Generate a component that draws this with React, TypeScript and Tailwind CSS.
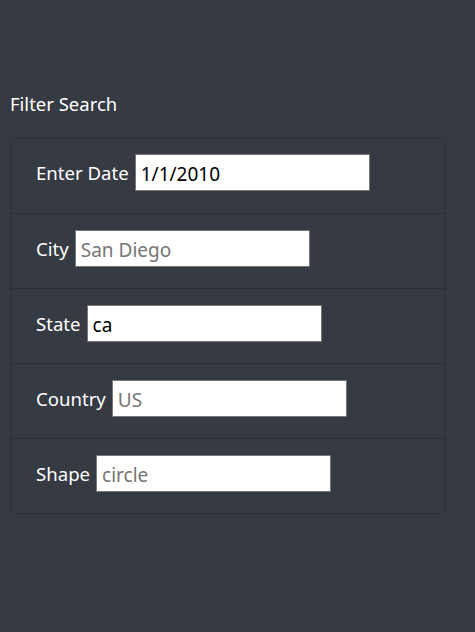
import React from 'react';

const fields = [
  { label: 'Enter Date', value: '1/1/2010', placeholder: '' },
  { label: 'City', value: '', placeholder: 'San Diego' },
  { label: 'State', value: 'ca', placeholder: '' },
  { label: 'Country', value: '', placeholder: 'US' },
  { label: 'Shape', value: '', placeholder: 'circle' },
];

export default function App() {
  return (
    <div
      className="min-h-[632px] w-full bg-[#363a42] pt-[91px] px-[10px] text-white"
      style={{ fontFamily: '"Noto Sans", "Open Sans", sans-serif' }}
    >
      <h5 className="text-[18.5px] leading-[26px]">Filter Search</h5>
      <ul className="mt-[21px] w-[436px] rounded-md border border-[#2c3037]">
        {fields.map((f, i) => (
          <li
            key={f.label}
            className={
              'flex h-[74px] items-start px-[25px] pt-[15px] ' +
              (i > 0 ? 'border-t border-[#2c3037] h-[75px] pt-[16px]' : '')
            }
          >
            <label className="mt-[4px] mr-[6px] text-[18.6px] leading-[30px]">{f.label}</label>
            <input
              defaultValue={f.value}
              placeholder={f.placeholder}
              className="h-[37px] w-[235px] border border-[#767676] bg-white px-[5px] pt-[2px] text-[19px] text-black placeholder:text-[#757575] outline-none"
            />
          </li>
        ))}
      </ul>
    </div>
  );
}
